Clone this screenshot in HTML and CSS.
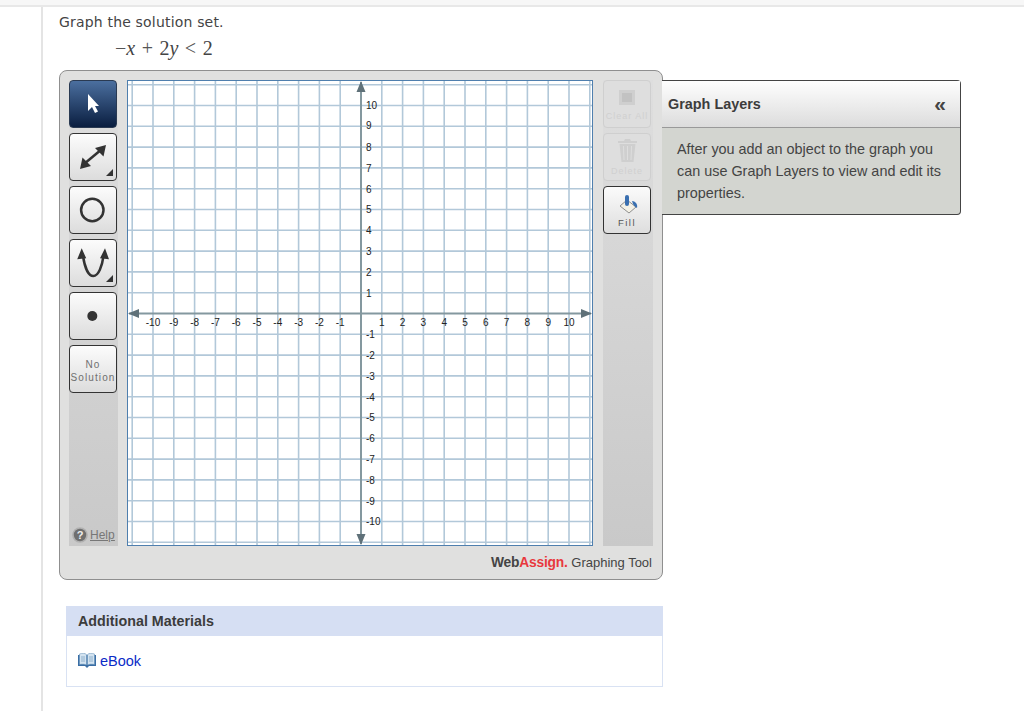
FILE: index.html
```html
<!DOCTYPE html>
<html lang="en">
<head>
<meta charset="utf-8">
<title>Graph the solution set</title>
<link rel="stylesheet" href="styles.css">
</head>
<body>
<div class="topbar"></div>
<main class="main">
  <p class="prompt">Graph the solution set.</p>
  <p class="equation"><span class="op">&minus;</span><i>x</i><span class="op"> + </span>2<i>y</i><span class="op"> &lt; </span>2</p>
  <div class="tool-row">
    <section class="tool">
      <div class="tool-body">
        <div class="side side-left">
          <button class="btn btn-active"><svg class="ico" viewBox="0 0 48 48"><path class="cursor" d="M19 14v17l4-4 3 6 3-1.500-3-5.500h4z"/></svg></button>
          <button class="btn"><svg class="ico" viewBox="0 0 48 48"><path class="stroke s25" d="M15 31 33 16"/><path class="solid" d="M11 36l2.500-11.500 8.500 8.500zM37 12l-2.500 11.500-8.500-8.500z"/><path class="solid" d="M44 43h-7l7-7z"/></svg></button>
          <button class="btn"><svg class="ico" viewBox="0 0 48 48"><circle class="stroke s25" cx="23.300" cy="24" r="11.200"/></svg></button>
          <button class="btn"><svg class="ico" viewBox="0 0 48 48"><path class="stroke s25" d="M14 17c1.500 10 5 20 10.300 20s8.800-10 10.200-20"/><path class="solid" d="M12.700 9.300l4.500 10-9 1zM36 9.300l4 11-9-1z"/><path class="solid" d="M44 43h-7l7-7z"/></svg></button>
          <button class="btn"><svg class="ico" viewBox="0 0 48 48"><circle class="solid" cx="23.300" cy="24" r="5"/></svg></button>
          <button class="btn btn-text">No<br>Solution</button>
          <a class="help" href="#"><svg class="help-ico" viewBox="0 0 16 16"><circle class="help-ring" cx="8" cy="8" r="7.800"/><circle class="help-disc" cx="8" cy="8" r="6.200"/><text class="help-q" x="8" y="11.700">?</text></svg><span class="help-text">Help</span></a>
        </div>
        <svg class="plot" viewBox="0 0 466 466">
          <path class="grid" d="M5.200 0V466M26 0V466M46.800 0V466M67.600 0V466M88.400 0V466M109.200 0V466M130 0V466M150.800 0V466M171.600 0V466M192.400 0V466M213.200 0V466M254.800 0V466M275.600 0V466M296.400 0V466M317.200 0V466M338 0V466M358.800 0V466M379.600 0V466M400.400 0V466M421.200 0V466M442 0V466M462.800 0V466M0 4.700H466M0 25.500H466M0 46.300H466M0 67.100H466M0 87.900H466M0 108.700H466M0 129.500H466M0 150.300H466M0 171.100H466M0 191.900H466M0 212.700H466M0 254.300H466M0 275.100H466M0 295.900H466M0 316.700H466M0 337.500H466M0 358.300H466M0 379.100H466M0 399.900H466M0 420.700H466M0 441.500H466M0 462.300H466"/>
          <path class="axis" d="M234 2V464M2 233.500H464"/>
          <path class="arrow" d="M234 1l4.500 11h-9zM234 465l4.500-11h-9zM1 233.500l11-4.500v9zM465 233.500l-11-4.500v9z"/>
          <g class="xlabels">
            <text x="26" y="246">-10</text><text x="46.800" y="246">-9</text><text x="67.600" y="246">-8</text><text x="88.400" y="246">-7</text><text x="109.200" y="246">-6</text><text x="130" y="246">-5</text><text x="150.800" y="246">-4</text><text x="171.600" y="246">-3</text><text x="192.400" y="246">-2</text><text x="213.200" y="246">-1</text><text x="254.800" y="246">1</text><text x="275.600" y="246">2</text><text x="296.400" y="246">3</text><text x="317.200" y="246">4</text><text x="338" y="246">5</text><text x="358.800" y="246">6</text><text x="379.600" y="246">7</text><text x="400.400" y="246">8</text><text x="421.200" y="246">9</text><text x="442" y="246">10</text>
          </g>
          <g class="ylabels">
            <text x="239" y="29">10</text><text x="239" y="49">9</text><text x="239" y="71">8</text><text x="239" y="91.500">7</text><text x="239" y="112.500">6</text><text x="239" y="133">5</text><text x="239" y="154">4</text><text x="239" y="175">3</text><text x="239" y="195.500">2</text><text x="239" y="217">1</text><text x="239" y="258">-1</text><text x="239" y="279">-2</text><text x="239" y="299.500">-3</text><text x="239" y="320.500">-4</text><text x="239" y="341">-5</text><text x="239" y="362">-6</text><text x="239" y="383">-7</text><text x="239" y="403.500">-8</text><text x="239" y="424.500">-9</text><text x="239" y="445">-10</text>
          </g>
          <rect class="plot-frame" x="0.500" y="0.500" width="465" height="465"/>
        </svg>
        <div class="side side-right">
          <button class="btn btn-off"><svg class="ico-top" viewBox="0 0 48 30"><rect class="off-fill" x="16" y="10" width="16" height="15"/><rect class="off-inner" x="19" y="13" width="10" height="9"/></svg><span class="btn-label">Clear All</span></button>
          <button class="btn btn-off"><svg class="ico-top" viewBox="0 0 48 30"><path class="off-fill" d="M15 8h6l1-2h5l1 2h6v2H15zM16.500 11h16l-2 18h-12z"/><path class="off-lines" d="M20.500 13l.5 14M24.500 13v14M28.500 13l-.5 14"/></svg><span class="btn-label btn-label-low">Delete</span></button>
          <button class="btn btn-fill"><svg class="ico-top" viewBox="0 0 48 30"><path class="fill-bucket" d="M24 14l9 7-7 6-9-7z"/><rect class="fill-brush" x="22" y="9" width="4" height="11" rx="2"/><path class="fill-drop" d="M29 15c3 0 6 3 5 7-2-1-4-3-5-7z"/></svg><span class="btn-label">Fill</span></button>
        </div>
      </div>
      <p class="credit"><b class="brand">Web<span class="brand-red">Assign.</span></b> Graphing Tool</p>
    </section>
    <aside class="layers">
      <header class="layers-head"><h2 class="layers-title">Graph Layers</h2><span class="layers-toggle">&laquo;</span></header>
      <p class="layers-text">After you add an object to the graph you can use Graph Layers to view and edit its properties.</p>
    </aside>
  </div>
  <section class="materials">
    <h3 class="materials-title">Additional Materials</h3>
    <div class="materials-body">
      <svg class="book" viewBox="0 0 18 15"><path class="book-cover" d="M0 2h18v11h-7l-2 2-2-2H0z"/><path class="book-page" d="M1.500 1C4 0 7 0 8.500 1.500V12C7 11 4 11 1.500 11.500zM16.500 1C14 0 11 0 9.500 1.500V12c1.500-1 4.500-1 7-.500z"/><path class="book-lines" d="M3 4h4M3 6h4M3 8h4M11 4h4M11 6h4M11 8h4"/></svg><a class="ebook" href="#">eBook</a>
    </div>
  </section>
</main>
</body>
</html>
```
FILE: styles.css
```css
* { box-sizing: border-box; }
html, body { margin: 0; padding: 0; background: #fff; }
body { height: 711px; overflow: hidden; font-family: "Liberation Sans", Arial, sans-serif; }

.topbar { height: 7px; background: #f7f7f7; border-bottom: 2px solid #e8e8e8; }

.main { margin-left: 41px; height: 704px; border-left: 2px solid #e4e4e4; padding-left: 16px; }

.prompt { margin: 0; padding-top: 7px; height: 27px; font: 14px/17px "DejaVu Sans", Verdana, sans-serif; letter-spacing: 0.180px; color: #444; }
.equation { margin: 0; padding-left: 56px; height: 36px; font: 20px/28px "Liberation Serif", "Times New Roman", serif; word-spacing: 1.500px; color: #444; white-space: pre; }
.equation .op { color: #555; }

.tool-row { display: flex; align-items: flex-start; }

.tool { width: 604px; height: 510px; padding: 9px 9px 0; background: #e0e0df; border: 1px solid #8f8f8f; border-radius: 8px; }
.tool-body { display: flex; height: 466px; }

.side { display: flex; flex-direction: column; gap: 5px; background: linear-gradient(#dedede, #c9c9c9); }
.side-left { position: relative; width: 49px; margin-right: 9px; }
.side-right { width: 50px; margin-left: 10px; }

.btn { display: flex; flex-direction: column; align-items: center; width: 48px; height: 48px; padding: 0; border: 1px solid #333; border-radius: 4px; background: linear-gradient(#fcfcfc, #dcdcdc); font-family: "Liberation Sans", Arial, sans-serif; }
.btn-active { border-color: #2a3a52; background: linear-gradient(#4b6f9f, #0a1e40); }
.btn-text { justify-content: center; padding-top: 3px; font-size: 10px; line-height: 13px; letter-spacing: 1.100px; color: #707070; }
.btn-off { border-color: #cfcfcf; background: #dedede; }
.btn-fill { background: linear-gradient(#fbfbfb, #dedede); }

.ico { flex: none; width: 48px; height: 48px; margin: -1px; }
.ico-top { flex: none; width: 48px; height: 30px; margin: -1px -1px 1px; }
.btn-label { font-size: 9.500px; line-height: 11px; letter-spacing: 1.500px; white-space: nowrap; color: #555; }
.btn-label-low { margin-top: 2px; }
.btn-off .btn-label { font-size: 9px; letter-spacing: 1px; color: #d0d0d0; }

.cursor { fill: #fff; }
.stroke { fill: none; stroke: #333; }
.s25 { stroke-width: 2.500; }
.solid { fill: #333; }
.off-fill { fill: #cfcfcf; }
.off-inner { fill: #c2c2c2; }
.off-lines { fill: none; stroke: #dedede; stroke-width: 1; }
.fill-bucket { fill: #f4f1e6; stroke: #8f8f8f; }
.fill-brush { fill: #3a6fb0; }
.fill-drop { fill: #3a6fb0; }

.help { position: absolute; left: 3px; bottom: 3px; display: flex; align-items: center; gap: 2px; color: #777; font-size: 12px; }
.help-ico { width: 16px; height: 16px; }
.help-ring { fill: #b0b0b0; }
.help-disc { fill: #6f6f6f; }
.help-q { fill: #eee; font-size: 11px; font-weight: 700; text-anchor: middle; }
.help-text { text-decoration: underline; }

.plot { display: block; width: 466px; height: 466px; flex: none; background: #fff; }
.grid { fill: none; stroke: #b2c8d9; stroke-width: 1.600; }
.axis { fill: none; stroke: #84989f; stroke-width: 2; }
.arrow { fill: #5f7179; }
.plot-frame { fill: none; stroke: #4f7fae; stroke-width: 1; }
.xlabels text, .ylabels text { font-size: 10px; fill: #222; }
.xlabels text { text-anchor: middle; }

.credit { margin: 9px 0 0; padding-right: 1px; text-align: right; font-size: 13px; line-height: 16px; color: #444; }
.brand { font-size: 13.800px; font-weight: 700; letter-spacing: -0.200px; color: #444; }
.brand-red { color: #e8383d; }

.layers { width: 299px; height: 135px; margin-top: 10px; margin-left: -1px; background: #d3d5d0; border: 1px solid #444; border-left: 0; border-radius: 0 4px 4px 0; }
.layers-head { display: flex; align-items: center; justify-content: space-between; height: 47px; padding: 0 14px 0 6px; background: linear-gradient(#fefefe, #dcdcdc); border-bottom: 1px solid #999; }
.layers-title { margin: 0; font-size: 14.400px; font-weight: 700; color: #3c3c3c; }
.layers-toggle { font-size: 21px; font-weight: 700; color: #444; }
.layers-text { margin: 0; padding: 10px 15px 0; font-size: 14.400px; line-height: 22px; color: #444; }

.materials { width: 597px; height: 81px; margin: 26px 0 0 7px; border: 1px solid #d9e2f3; border-top: 0; }
.materials-title { margin: 0 -1px; padding-left: 12px; height: 30px; background: #d6dff3; font-size: 14.300px; font-weight: 700; line-height: 30px; color: #3c3c3c; }
.materials-body { display: flex; align-items: center; gap: 4px; padding: 16px 0 0 11px; }
.book { width: 18px; height: 15px; margin-top: -2px; }
.book-cover { fill: #3a6ea5; }
.book-page { fill: #d3e3f0; stroke: #5c8ab5; stroke-width: 0.500; }
.book-lines { fill: none; stroke: #8fb0cc; stroke-width: 1; }
.ebook { font-size: 14.500px; line-height: 18px; color: #0a2bc7; text-decoration: none; }
```
